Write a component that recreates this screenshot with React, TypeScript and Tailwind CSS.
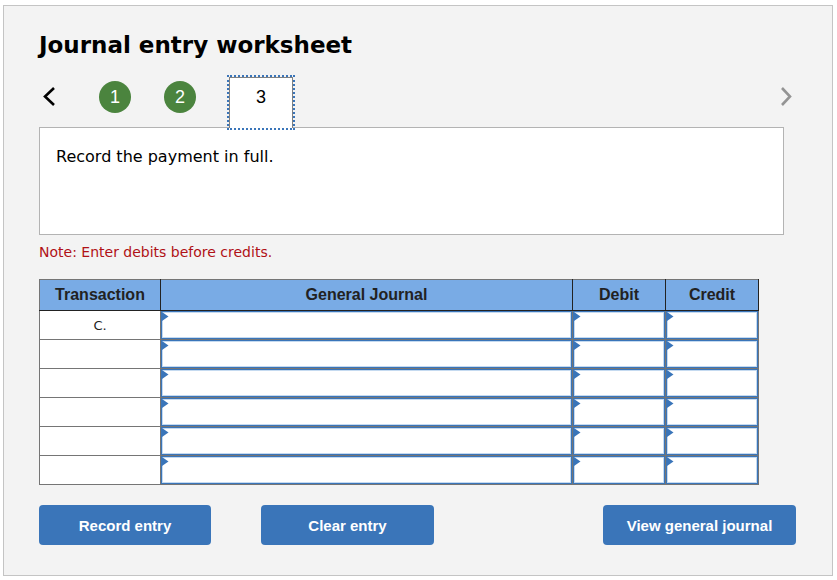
import React, { useState } from "react";
import clsx from "clsx";

interface EntryRow {
  account: string;
  debit: string;
  credit: string;
}

const FIELDS: { key: keyof EntryRow; label: string }[] = [
  { key: "account", label: "General Journal" },
  { key: "debit", label: "Debit" },
  { key: "credit", label: "Credit" },
];

const emptyRows = (): EntryRow[] =>
  Array.from({ length: 6 }, () => ({ account: "", debit: "", credit: "" }));

const Chevron: React.FC<{ points: string }> = ({ points }) => (
  <svg width="14" height="20" viewBox="0 0 14 20" fill="none" aria-hidden="true">
    <polyline points={points} stroke="currentColor" strokeWidth="2.6" />
  </svg>
);

const StepNav: React.FC = () => (
  <nav className="flex items-start gap-[33px] font-['Liberation_Sans',Arial,sans-serif]">
    <button
      type="button"
      aria-label="Previous entry"
      className="flex h-10 w-[27px] items-center pl-[3px] text-black"
    >
      <Chevron points="12,1 3,9.5 12,18" />
    </button>
    {[1, 2].map((step) => (
      <button
        key={step}
        type="button"
        className="mt-1 size-8 rounded-full bg-[#4b843e] text-lg leading-8 text-white"
      >
        {step}
      </button>
    ))}
    <button
      type="button"
      aria-current="step"
      className="z-10 -mb-px flex h-[51px] w-16 justify-center border border-b-0 border-[#808080] bg-white pt-[3px] text-lg leading-8 text-black outline-2 outline-dotted outline-[#3a75b9]"
    >
      3
    </button>
    <button
      type="button"
      aria-label="Next entry"
      className="ml-auto flex h-10 w-4 items-center text-[#949494]"
    >
      <Chevron points="2,1 10,9.5 2,18" />
    </button>
  </nav>
);

const App: React.FC = () => {
  const [rows, setRows] = useState<EntryRow[]>(emptyRows);

  const updateRow = (index: number, key: keyof EntryRow, value: string) => {
    setRows(rows.map((row, i) => (i === index ? { ...row, [key]: value } : row)));
  };

  const buttonClass =
    "h-10 rounded-sm bg-[#3a75b9] pt-0.5 text-[15px] font-bold text-white";

  return (
    <main className="mt-[5px] mr-1 mb-1 ml-[3px] border border-[#c4c4c4] bg-[#f3f3f3] pt-[23px] pr-9 pb-[30px] pl-[35px] font-['DejaVu_Sans',Verdana,sans-serif]">
      <h1 className="mb-4 text-[23px] leading-8 font-bold text-black">
        Journal entry worksheet
      </h1>

      <StepNav />

      <section className="mr-3 h-[108px] border border-[#b3b3b3] bg-white px-4 py-[18px] text-base leading-[22px] text-black">
        Record the payment in full.
      </section>

      <p className="mt-[7px] mb-[17px] text-sm leading-5 text-[#b01116]">
        Note: Enter debits before credits.
      </p>

      <div className="pr-[37px]">
        <table className="w-full table-fixed border-collapse border border-[#757575] bg-white">
          <colgroup>
            <col className="w-[121px]" />
            <col />
            <col className="w-[93px]" />
            <col className="w-[93px]" />
          </colgroup>
          <thead className="bg-[#79abe5] font-['Liberation_Sans',Arial,sans-serif] text-base text-[#222]">
            <tr className="h-[31px]">
              <th className="border border-t-[#757575] border-r-[#222] border-b-[#222] border-l-[#757575] p-0">
                Transaction
              </th>
              {FIELDS.map(({ key, label }) => (
                <th key={key} className="border border-[#222] border-t-[#757575] p-0">
                  {label}
                </th>
              ))}
            </tr>
          </thead>
          <tbody>
            {rows.map((row, index) => (
              <tr key={index} className="h-[29px]">
                <td className="border border-[#757575] p-0 pt-0.5 text-center text-[13px] text-[#222]">
                  {index === 0 && "C."}
                </td>
                {FIELDS.map(({ key, label }) => (
                  <td key={key} className="relative border border-[#757575] p-0">
                    <input
                      type="text"
                      aria-label={`${label}, line ${index + 1}`}
                      value={row[key]}
                      onChange={(e) => updateRow(index, key, e.target.value)}
                      className={clsx(
                        "block h-7 w-full border border-[#3a75b9] bg-white px-2 text-sm inset-ring inset-ring-[#c5daf0] outline-none",
                        key !== "account" && "text-right"
                      )}
                    />
                    <svg
                      className="pointer-events-none absolute top-px left-px"
                      width="7"
                      height="10"
                      viewBox="0 0 7 10"
                      aria-hidden="true"
                    >
                      <path d="M0 0 L6.5 4.5 L0 9 Z" fill="#3a75b9" />
                    </svg>
                  </td>
                ))}
              </tr>
            ))}
          </tbody>
        </table>
      </div>

      <div className="mt-5 flex gap-[50px] font-['Liberation_Sans',Arial,sans-serif]">
        <button type="button" className={clsx(buttonClass, "w-[172px]")}>
          Record entry
        </button>
        <button
          type="button"
          className={clsx(buttonClass, "w-[173px]")}
          onClick={() => setRows(emptyRows())}
        >
          Clear entry
        </button>
        <button type="button" className={clsx(buttonClass, "ml-auto w-[193px]")}>
          View general journal
        </button>
      </div>
    </main>
  );
};

export default App;
